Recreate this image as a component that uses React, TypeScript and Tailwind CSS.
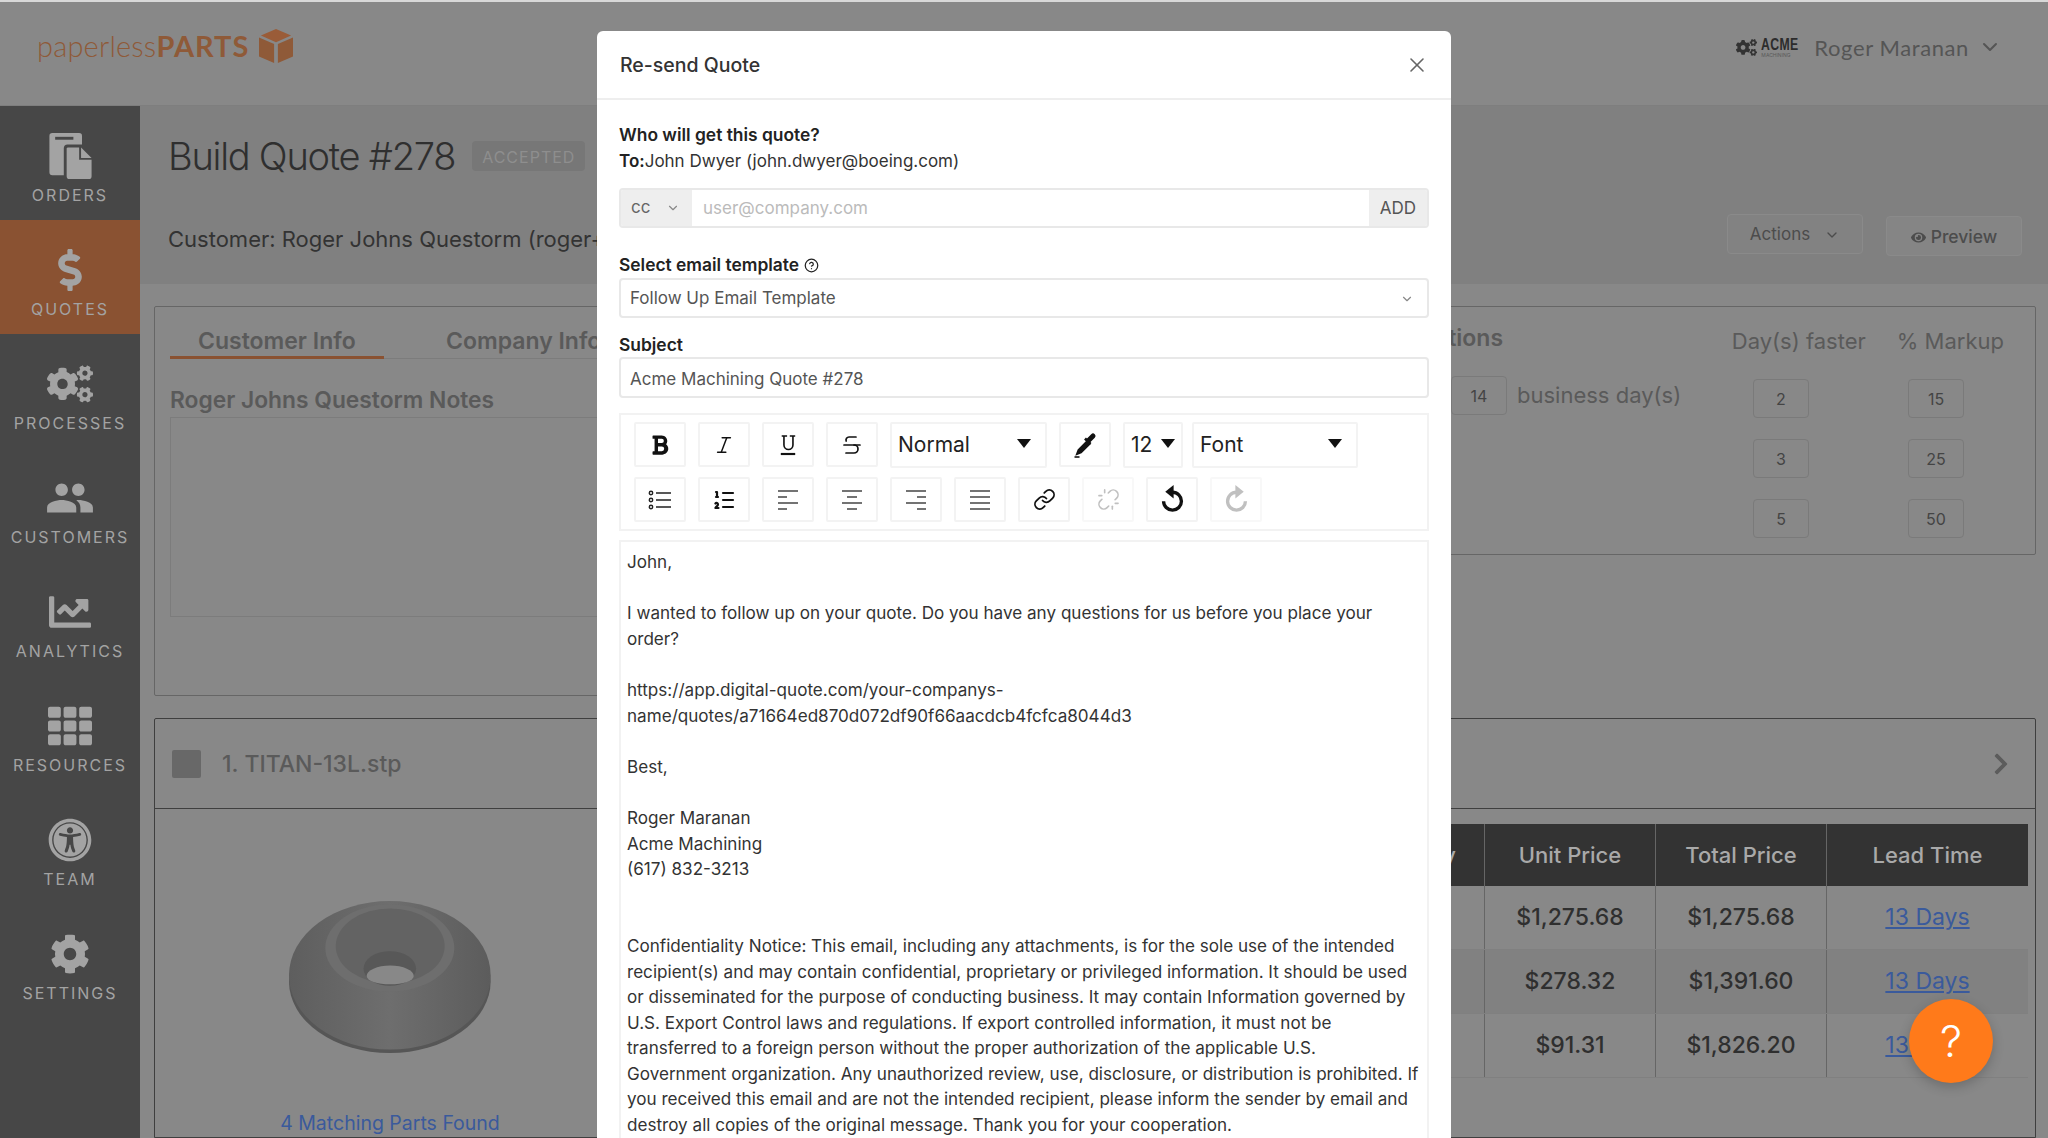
import type { ReactNode } from "react";
import {
  FaBold,
  FaChartLine,
  FaChevronRight,
  FaCog,
  FaCogs,
  FaDollarSign,
  FaEye,
  FaTh,
  FaUniversalAccess,
} from "react-icons/fa";
import { MdPeople } from "react-icons/md";
import { ChevronDown, CircleHelp, Italic, Link, ListOrdered, Strikethrough, Unlink, X } from "lucide-react";

function OrdersIcon() {
  return (
    <svg viewBox="0 0 44 48" className="h-[46px] w-[43px]" fill="#a3a3a3">
      <path d="M3 0h28a3 3 0 0 1 3 3v9H19a4 4 0 0 0-4 4v28H3a3 3 0 0 1-3-3V3a3 3 0 0 1 3-3z" />
      <rect x="6" y="4" width="19" height="3" fill="#474747" />
      <path d="M19 15h12v13h13v17a3 3 0 0 1-3 3H21a3 3 0 0 1-3-3V16z" />
      <path d="M33 15l11 11H33z" />
    </svg>
  );
}

const navItems = [
  { label: "ORDERS", icon: <OrdersIcon /> },
  { label: "QUOTES", icon: <FaDollarSign className="text-[42px]" />, active: true },
  { label: "PROCESSES", icon: <FaCogs className="text-[46px]" /> },
  { label: "CUSTOMERS", icon: <MdPeople className="text-[50px]" /> },
  { label: "ANALYTICS", icon: <FaChartLine className="text-[42px]" /> },
  { label: "RESOURCES", icon: <FaTh className="text-[44px]" /> },
  { label: "TEAM", icon: <FaUniversalAccess className="text-[44px]" /> },
  { label: "SETTINGS", icon: <FaCog className="text-[40px]" /> },
];

const priceRows = [
  { unit: "$1,275.68", total: "$1,275.68", dark: false },
  { unit: "$278.32", total: "$1,391.60", dark: true },
  { unit: "$91.31", total: "$1,826.20", dark: false },
];

const speedRows = [
  ["2", "15"],
  ["3", "25"],
  ["5", "50"],
];

const noticeLines = [
  "Confidentiality Notice: This email, including any attachments, is for the sole use of the intended",
  "recipient(s) and may contain confidential, proprietary or privileged information. It should be used",
  "or disseminated for the purpose of conducting business. It may contain Information governed by",
  "U.S. Export Control laws and regulations. If export controlled information, it must not be",
  "transferred to a foreign person without the proper authorization of the applicable U.S.",
  "Government organization. Any unauthorized review, use, disclosure, or distribution is prohibited. If",
  "you received this email and are not the intended recipient, please inform the sender by email and",
  "destroy all copies of the original message. Thank you for your cooperation.",
];

function SmallInput({ value }: { value: string }) {
  return (
    <div className="flex h-[39px] w-[56px] items-center justify-center rounded-[4px] border border-[#7a7a7a] text-[16px] text-[#444]">
      {value}
    </div>
  );
}

function Sidebar() {
  return (
    <aside className="flex w-[140px] shrink-0 flex-col bg-[#474747]">
      {navItems.map((item) => (
        <div
          key={item.label}
          className={`flex h-[114px] flex-col items-center gap-[4px] pt-[25px] text-[#a3a3a3] ${
            item.active ? "bg-[#8a5232]" : ""
          }`}
        >
          <div className="flex h-[50px] items-center justify-center">{item.icon}</div>
          <span className="text-[16px] leading-[20px] tracking-[2px]">{item.label}</span>
        </div>
      ))}
    </aside>
  );
}

function TopBar() {
  return (
    <header className="flex h-[104px] items-center justify-between border-b border-[#7e7e7e] bg-[#888888] pb-[14px] pl-[37px] pr-[46px]">
      <div className="mt-[-2px] flex items-center gap-[10px]">
        <span className="text-[29px] text-[#8f5a38] [font-family:Lato,sans-serif]">
          <span className="font-light tracking-[0.2px]">paperless</span>
          <span className="font-bold tracking-[1px]">PARTS</span>
        </span>
        <svg viewBox="0 0 36 36" className="h-[36px] w-[34px]">
          <path d="M18 0l16 7-16 7L2 7z" fill="#9a5c38" />
          <path d="M0 9l16 7v20L0 29z" fill="#8f5a38" />
          <path d="M36 9l-16 7v20l16-7z" fill="#8f5a38" />
        </svg>
      </div>
      <div className="mt-[1px] flex items-center">
        <div className="mr-[21px] flex items-center gap-[4px]">
          <FaCogs className="text-[21px] text-[#333]" />
          <div className="flex w-[32px] flex-col leading-none">
            <span className="origin-left scale-x-[0.72] whitespace-nowrap text-[17px] font-bold tracking-[0.5px] text-[#2c2c2c] [font-family:'Liberation_Sans',sans-serif]">
              ACME
            </span>
            <span className="whitespace-nowrap text-[5px] text-[#5a5a5a]">MACHINING</span>
          </div>
        </div>
        <span className="text-[22px] tracking-[0.6px] text-[#555] [font-family:Lato,sans-serif]">
          Roger Maranan
        </span>
        <ChevronDown className="ml-[9px] h-[24px] w-[24px] text-[#555]" strokeWidth={2} />
      </div>
    </header>
  );
}

function PageBand() {
  return (
    <div className="flex h-[178px] shrink-0 justify-between bg-[#808080] pl-[28px] pr-[26px]">
      <div className="pt-[26px]">
        <div className="flex items-center gap-[17px]">
          <h1 className="whitespace-nowrap text-[38px] font-light leading-[48px] tracking-[-1.25px] text-[#2f2f2f]">
            Build Quote #278
          </h1>
          <span className="rounded-[4px] bg-[#777777] px-[10px] pb-[2px] pt-[4px] text-[16px] tracking-[1px] text-[#8e8e8e]">
            ACCEPTED
          </span>
        </div>
        <p className="mt-[44px] whitespace-nowrap text-[22px] leading-[30px] text-[#333]">
          Customer: Roger Johns Questorm (roger+
        </p>
      </div>
      <div className="flex items-start gap-[23px] pt-[108px] text-[#4c4c4c]">
        <div className="flex h-[40px] w-[136px] items-center justify-center gap-[14px] rounded-[4px] border border-[#8a8a8a] bg-[#828282] pt-[2px] text-[17px]">
          Actions
          <ChevronDown className="h-[16px] w-[16px]" />
        </div>
        <div className="mt-[2px] flex h-[40px] w-[136px] items-center justify-center gap-[5px] rounded-[4px] border border-[#8a8a8a] bg-[#858585] pt-[2px] text-[17.5px] font-medium">
          <FaEye className="text-[15px]" />
          Preview
        </div>
      </div>
    </div>
  );
}

function InfoPanels() {
  return (
    <div className="flex items-start">
      <section className="h-[390px] w-[800px] shrink-0 rounded-l-[2px] border border-[#666] pl-[15px] pt-[16px]">
        <div className="flex h-[36px] border-b border-[#7c7c7c]">
          <div className="h-[36px] w-[214px] whitespace-nowrap border-b-[3px] border-[#8a5232] pl-[28px] text-[23px] font-semibold leading-[36px] text-[#5a5a5a]">
            Customer Info
          </div>
          <div className="ml-[62px] whitespace-nowrap text-[23px] font-semibold leading-[36px] text-[#5a5a5a]">
            Company Info
          </div>
        </div>
        <h3 className="mt-[26px] text-[22.8px] font-semibold leading-[30px] text-[#5a5a5a]">Roger Johns Questorm Notes</h3>
        <div className="mt-[2px] h-[200px] border border-[#7c7c7c]" />
      </section>
      <section className="h-[249px] flex-1 rounded-r-[2px] border border-[#666] pr-[31px] pt-[16px]">
        <div className="flex h-[36px] items-start justify-between pl-[401px]">
          <span className="text-[23px] font-semibold leading-[30px] text-[#5a5a5a]">Lead Options</span>
          <div className="flex gap-[31px] text-[22px] leading-[36px] text-[#5a5a5a]">
            <span className="whitespace-nowrap">Day(s) faster</span>
            <span className="whitespace-nowrap">% Markup</span>
          </div>
        </div>
        <div className="mt-[17px] flex items-start justify-between pl-[496px]">
          <div className="flex items-center gap-[10px]">
            <SmallInput value="14" />
            <span className="whitespace-nowrap text-[22px] text-[#5a5a5a]">business day(s)</span>
          </div>
          <div className="mt-[3px] flex flex-col gap-[21px] pr-[40px]">
            {speedRows.map(([days, markup]) => (
              <div key={days} className="flex gap-[99px]">
                <SmallInput value={days} />
                <SmallInput value={markup} />
              </div>
            ))}
          </div>
        </div>
      </section>
    </div>
  );
}

function PartPreview() {
  return (
    <svg viewBox="757 930 523 405" preserveAspectRatio="none" className="h-[152px] w-[202px]">
      <defs>
        <linearGradient id="body" x1="0" y1="0" x2="1" y2="0">
          <stop offset="0" stopColor="#5e5e5e" />
          <stop offset="0.5" stopColor="#6e6e6e" />
          <stop offset="1" stopColor="#5c5c5c" />
        </linearGradient>
      </defs>
      <ellipse cx="1018" cy="1145" rx="261" ry="190" fill="#565656" />
      <ellipse cx="1018" cy="1128" rx="261" ry="198" fill="url(#body)" />
      <ellipse cx="1018" cy="1055" rx="167" ry="116" fill="#6e6e6e" />
      <ellipse cx="1019" cy="1050" rx="141" ry="100" fill="#636363" />
      <ellipse cx="1018" cy="1110" rx="68" ry="46" fill="#585858" />
      <path d="M958 1130a61 28 0 0 1 122 0a61 22 0 0 1-122 0z" fill="#888888" />
    </svg>
  );
}

function PartCard() {
  return (
    <section className="mt-[22px] flex-1 rounded-t-[2px] border border-[#3f3f3f]">
      <div className="flex h-[90px] items-center justify-between border-b border-[#3f3f3f] pl-[17px] pr-[22px]">
        <div className="flex items-center gap-[21px]">
          <div className="h-[28px] w-[29px] rounded-[2px] bg-[#686868]" />
          <span className="pt-[2px] text-[23px] font-medium text-[#5a5a5a]">1. TITAN-13L.stp</span>
        </div>
        <FaChevronRight className="text-[24px] text-[#5c5c5c]" />
      </div>
      <div className="flex">
        <div className="flex w-[470px] shrink-0 flex-col items-center pt-[92px]">
          <PartPreview />
          <span className="mt-[57px] whitespace-nowrap text-[19.5px] leading-[26px] text-[#3a5a9c]">
            4 Matching Parts Found
          </span>
        </div>
        <div className="flex flex-1 justify-end pr-[7px] pt-[15px]">
          <div className="w-[730px]">
            <div className="grid h-[62px] grid-cols-[187px_171px_171px_201px] bg-[#333333] text-[22px] font-medium text-[#a9a9a9]">
              <div className="flex items-center justify-end border-r border-[#666] pr-[28px]">Qty</div>
              <div className="flex items-center justify-center border-r border-[#666]">Unit Price</div>
              <div className="flex items-center justify-center border-r border-[#666]">Total Price</div>
              <div className="flex items-center justify-center">Lead Time</div>
            </div>
            {priceRows.map((row) => (
              <div
                key={row.unit}
                className={`grid h-[64px] grid-cols-[187px_171px_171px_201px] border-b border-[#808080] text-[23px] font-medium text-[#2f2f2f] ${
                  row.dark ? "bg-[#818181]" : ""
                }`}
              >
                <div className="border-r border-[#666]" />
                <div className="flex items-center justify-center border-r border-[#666]">{row.unit}</div>
                <div className="flex items-center justify-center border-r border-[#666]">{row.total}</div>
                <div className="flex items-center justify-center font-normal text-[#3a5a9c] underline underline-offset-2">
                  13 Days
                </div>
              </div>
            ))}
          </div>
        </div>
      </div>
    </section>
  );
}

function ToolButton({ children, faded = false }: { children: ReactNode; faded?: boolean }) {
  return (
    <div
      className={`flex h-[45px] w-[52px] items-center justify-center rounded-[2px] border-2 ${
        faded ? "border-[#f8f8f8] text-[#c0c0c0]" : "border-[#f3f3f3] text-[#111]"
      }`}
    >
      {children}
    </div>
  );
}

function Caret() {
  return <span className="mb-[4px] h-0 w-0 border-x-[7px] border-t-[9px] border-x-transparent border-t-[#111]" />;
}

function ToolSelect({ label, width }: { label: string; width: string }) {
  return (
    <div
      className={`flex h-[46px] items-center justify-between rounded-[2px] border-2 border-[#f3f3f3] pl-[6px] pr-[14px] text-[21px] text-[#222] ${width}`}
    >
      {label}
      <Caret />
    </div>
  );
}

function UnderlineIcon() {
  return (
    <svg viewBox="0 0 20 24" className="h-[22px] w-[18px]" fill="none" stroke="#111" strokeWidth="1.8">
      <path d="M3 2h6M12 2h6M5.5 2v10a5 5 0 0 0 10 0V2" />
      <path d="M2 22h16" strokeWidth="2.4" />
    </svg>
  );
}

function DropperIcon() {
  return (
    <svg viewBox="0 0 24 26" className="h-[26px] w-[24px]" fill="none" stroke="#111">
      <path d="M15.5 8.5l4.5-4.5" strokeWidth="5" strokeLinecap="round" />
      <path d="M12 6.5l5.5 5.5" strokeWidth="2.6" />
      <path d="M14 9.5L5.5 18l-1.5 4 4-1.5 8.5-8.5z" strokeWidth="2" fill="#111" />
      <path d="M1.5 25h5" strokeWidth="1.6" />
    </svg>
  );
}

function BulletsIcon() {
  return (
    <svg viewBox="0 0 24 24" className="h-[24px] w-[24px]" fill="none" stroke="#222">
      <circle cx="3" cy="5" r="1.7" strokeWidth="1.4" />
      <circle cx="3" cy="12" r="1.7" strokeWidth="1.4" />
      <circle cx="3" cy="19" r="1.7" strokeWidth="1.4" />
      <path d="M8 5h15M8 12h15M8 19h15" strokeWidth="1.5" />
    </svg>
  );
}

// each row is [x1, x2] of a line in the align icon
function AlignIcon({ rows }: { rows: number[][] }) {
  return (
    <svg viewBox="0 0 24 24" className="h-[24px] w-[24px]" stroke="#444" strokeWidth="1.5">
      {rows.map(([a, b], i) => (
        <path key={i} d={`M${a} ${3 + i * 6}H${b}`} />
      ))}
    </svg>
  );
}

function HistoryIcon({ redo = false }: { redo?: boolean }) {
  return (
    <svg viewBox="0 0 24 26" className={`h-[29px] w-[27px] ${redo ? "-scale-x-100" : ""}`}>
      <path d="M12 6.5a8 8 0 1 1-8 8" fill="none" stroke="currentColor" strokeWidth="3" />
      <path d="M13 0v12L5.5 6z" fill="currentColor" />
    </svg>
  );
}

function EditorToolbar() {
  return (
    <div className="mt-[15px] flex flex-col gap-[9px] border-2 border-[#f2f2f2] px-[13px] pb-[7px] pt-[7px]">
      <div className="flex gap-[12px]">
        <ToolButton><FaBold className="text-[22px]" /></ToolButton>
        <ToolButton><Italic className="h-[22px] w-[22px]" strokeWidth={1.6} /></ToolButton>
        <ToolButton><UnderlineIcon /></ToolButton>
        <ToolButton><Strikethrough className="h-[24px] w-[24px]" strokeWidth={1.7} /></ToolButton>
        <ToolSelect label="Normal" width="w-[157px]" />
        <ToolButton><DropperIcon /></ToolButton>
        <div className="flex h-[46px] w-[60px] items-center justify-between rounded-[2px] border-2 border-[#f3f3f3] pl-[6px] pr-[6px] text-[21px] text-[#222]">
          12
          <Caret />
        </div>
        <ToolSelect label="Font" width="ml-[-3px] w-[166px]" />
      </div>
      <div className="flex gap-[12px]">
        <ToolButton><BulletsIcon /></ToolButton>
        <ToolButton><ListOrdered className="h-[24px] w-[24px]" strokeWidth={2.2} /></ToolButton>
        <ToolButton><AlignIcon rows={[[2, 22], [2, 11], [2, 22], [2, 11]]} /></ToolButton>
        <ToolButton><AlignIcon rows={[[2, 22], [7, 17], [2, 22], [7, 17]]} /></ToolButton>
        <ToolButton><AlignIcon rows={[[2, 22], [13, 22], [2, 22], [13, 22]]} /></ToolButton>
        <ToolButton><AlignIcon rows={[[2, 22], [2, 22], [2, 22], [2, 22]]} /></ToolButton>
        <ToolButton><Link className="h-[23px] w-[23px]" strokeWidth={1.9} /></ToolButton>
        <ToolButton faded><Unlink className="h-[23px] w-[23px]" strokeWidth={1.7} /></ToolButton>
        <ToolButton><HistoryIcon /></ToolButton>
        <ToolButton faded><HistoryIcon redo /></ToolButton>
      </div>
    </div>
  );
}

function EmailBody() {
  return (
    <div className="mt-[9px] border-2 border-b-0 border-[#f2f2f2] px-[6px] pb-[60px] pt-[7px] text-[17.1px] leading-[25.6px] text-[#333]">
      <p>John,</p>
      <p className="mt-[25.6px]">
        I wanted to follow up on your quote. Do you have any questions for us before you place your order?
      </p>
      <p className="mt-[25.6px]">
        https://app.digital-quote.com/your-companys-
        <br />
        name/quotes/a71664ed870d072df90f66aacdcb4fcfca8044d3
      </p>
      <p className="mt-[25.6px]">Best,</p>
      <p className="mt-[25.6px]">
        Roger Maranan
        <br />
        Acme Machining
        <br />
        (617) 832-3213
      </p>
      <div className="mt-[51.2px] whitespace-nowrap">
        {noticeLines.map((line) => (
          <p key={line}>{line}</p>
        ))}
      </div>
    </div>
  );
}

function ResendModal() {
  return (
    <div className="absolute left-[597px] top-[31px] w-[854px] rounded-[6px] bg-white text-[#333]">
      <div className="flex h-[69px] items-center justify-between border-b-2 border-[#eeeeee] pl-[23px] pr-[22px]">
        <h2 className="pt-[2px] text-[19.5px] font-medium text-[#333]">Re-send Quote</h2>
        <X className="h-[24px] w-[24px] text-[#666]" strokeWidth={1.6} />
      </div>
      <div className="px-[22px] pt-[22px]">
        <p className="text-[17.4px] font-semibold leading-[26px] text-[#222]">Who will get this quote?</p>
        <p className="text-[17px] leading-[26px]">
          <span className="font-semibold text-[#222]">To:</span>John Dwyer (john.dwyer@boeing.com)
        </p>
        <div className="mt-[14px] flex h-[40px] overflow-hidden rounded-[4px] border-2 border-[#e8e8e8]">
          <div className="flex w-[71px] items-center justify-between bg-[#eeeeee] pl-[10px] pr-[12px] text-[17px] text-[#666]">
            cc
            <ChevronDown className="h-[14px] w-[14px] text-[#888]" />
          </div>
          <div className="flex flex-1 items-center pl-[11px] pt-[2px] text-[17px] text-[#bbbbbb]">user@company.com</div>
          <div className="flex w-[58px] items-center justify-center bg-[#eeeeee] pt-[2px] text-[17px] text-[#555]">ADD</div>
        </div>
        <div className="mt-[25px] flex h-[24px] items-center gap-[5px] text-[17.4px] font-semibold text-[#222]">
          Select email template
          <CircleHelp className="h-[15px] w-[15px]" strokeWidth={2} />
        </div>
        <div className="mt-[1px] flex h-[40px] items-center justify-between rounded-[4px] border-2 border-[#e8e8e8] pl-[9px] pr-[13px] pt-[2px] text-[17px] text-[#555]">
          Follow Up Email Template
          <ChevronDown className="h-[14px] w-[14px] text-[#888]" />
        </div>
        <div className="mt-[15px] text-[17.4px] font-semibold leading-[24px] text-[#222]">Subject</div>
        <div className="flex h-[41px] items-center rounded-[4px] border-2 border-[#e8e8e8] pl-[9px] pt-[4px] text-[17px] text-[#555]">
          Acme Machining Quote #278
        </div>
        <EditorToolbar />
        <EmailBody />
      </div>
    </div>
  );
}

export default function App() {
  return (
    <div className="relative h-[1138px] w-[2048px] overflow-hidden bg-[#888888] [font-family:Inter,sans-serif]">
      <div className="h-[2px] bg-[#d8d8d8]" />
      <TopBar />
      <div className="flex h-[1032px]">
        <Sidebar />
        <main className="flex min-w-0 flex-1 flex-col">
          <PageBand />
          <div className="flex flex-1 flex-col pl-[14px] pr-[12px] pt-[22px]">
            <InfoPanels />
            <PartCard />
          </div>
        </main>
      </div>
      <ResendModal />
      <div className="absolute left-[1909px] top-[999px] flex h-[84px] w-[84px] items-center justify-center rounded-full bg-[#ff7a1a] text-[44px] font-light text-white shadow-[0_4px_12px_rgba(0,0,0,0.2)]">
        ?
      </div>
    </div>
  );
}
